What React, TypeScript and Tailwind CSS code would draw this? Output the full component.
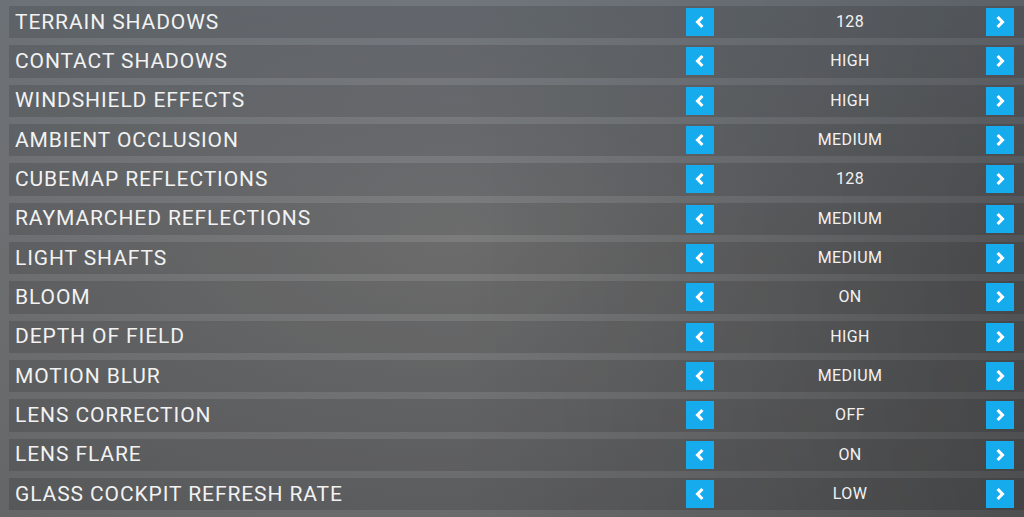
const settings: [string, string][] = [
  ['TERRAIN SHADOWS', '128'],
  ['CONTACT SHADOWS', 'HIGH'],
  ['WINDSHIELD EFFECTS', 'HIGH'],
  ['AMBIENT OCCLUSION', 'MEDIUM'],
  ['CUBEMAP REFLECTIONS', '128'],
  ['RAYMARCHED REFLECTIONS', 'MEDIUM'],
  ['LIGHT SHAFTS', 'MEDIUM'],
  ['BLOOM', 'ON'],
  ['DEPTH OF FIELD', 'HIGH'],
  ['MOTION BLUR', 'MEDIUM'],
  ['LENS CORRECTION', 'OFF'],
  ['LENS FLARE', 'ON'],
  ['GLASS COCKPIT REFRESH RATE', 'LOW'],
]

function Arrow({ dir }: { dir: 'left' | 'right' }) {
  return (
    <button
      type="button"
      className="w-[28px] h-[28px] bg-[#16abed] flex items-center justify-center shrink-0"
      aria-label={dir === 'left' ? 'Previous' : 'Next'}
    >
      <svg width="12" height="14" viewBox="0 0 12 14" fill="none">
        <path
          d={dir === 'left' ? 'M8.4 2 L3.6 7 L8.4 12' : 'M3.6 2 L8.4 7 L3.6 12'}
          stroke="white"
          strokeWidth={3.2}
          strokeLinejoin="miter"
        />
      </svg>
    </button>
  )
}

export default function App() {
  return (
    <div
      className="w-[1024px] h-[517px] overflow-hidden relative font-['Roboto',sans-serif] text-[#f2f2f2]"
      style={{
        background:
          'linear-gradient(to right, rgba(0,0,0,0) 0%, rgba(0,0,0,0) 45%, rgba(0,0,0,0.22) 100%), radial-gradient(ellipse at 45% 45%, #7c7c7c 0%, #6e6f71 50%, #626365 100%), #666',
      }}
    >
      <div className="absolute inset-0 bg-gradient-to-b from-[#7b8a99]/30 via-transparent to-transparent" />
      <div className="relative flex flex-col gap-[7px] pt-[6px] pl-[9px]">
        {settings.map(([label, value]) => (
          <div key={label} className="h-[32.33px] bg-black/[0.13] flex items-center">
            <div className="flex-1 pl-[6px] text-[21px] leading-none tracking-[0.9px]">{label}</div>
            <div className="w-[328px] mr-[10px] flex items-center">
              <Arrow dir="left" />
              <div className="flex-1 text-center text-[16px] leading-none tracking-[0.4px]">{value}</div>
              <Arrow dir="right" />
            </div>
          </div>
        ))}
      </div>
    </div>
  )
}
